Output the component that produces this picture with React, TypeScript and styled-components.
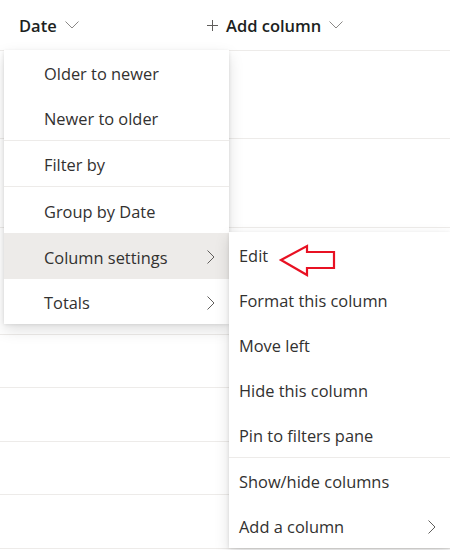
import styled, { createGlobalStyle } from 'styled-components'

const GlobalStyle = createGlobalStyle`
	body {
		margin: 0;
		background: #ffffff;
		font-family: 'Open Sans', 'Noto Sans', sans-serif;
		color: #323130;
	}
`

const Page = styled.div`
	position: relative;
	width: 450px;
	height: 550px;
	overflow: hidden;
`

const HeaderRow = styled.div`
	display: flex;
	align-items: center;
	height: 50px;
	border-bottom: 1px solid #edebe9;
`

const HeaderCell = styled.div<{ $width: number }>`
	display: flex;
	align-items: center;
	gap: 8px;
	width: ${(p) => p.$width}px;
	padding-left: 19px;
	box-sizing: border-box;
	font-size: 16.5px;
	font-weight: 600;
	color: #201f1e;
`

const Row = styled.div<{ $h: number }>`
	height: ${(p) => p.$h}px;
	border-bottom: 1px solid #edebe9;
`

const Menu = styled.div<{ $left: number; $top: number; $width: number }>`
	position: absolute;
	left: ${(p) => p.$left}px;
	top: ${(p) => p.$top}px;
	width: ${(p) => p.$width}px;
	background: #ffffff;
	box-shadow: 0 6.4px 14.4px rgba(0, 0, 0, 0.13), 0 1.2px 3.6px rgba(0, 0, 0, 0.11);
`

const Item = styled.div<{ $indent: number; $active?: boolean; $h?: number }>`
	display: flex;
	align-items: center;
	justify-content: space-between;
	height: ${(p) => p.$h ?? 45}px;
	padding: 2px 14px 0 ${(p) => p.$indent}px;
	box-sizing: border-box;
	font-size: 16.4px;
	color: #323130;
	background: ${(p) => (p.$active ? '#edebe9' : 'transparent')};
`

const Divider = styled.div`
	height: 1px;
	background: #edebe9;
`

const Arrow = styled.svg`
	position: absolute;
	left: 278px;
	top: 243px;
`

const Chevron = ({ dir }: { dir: 'down' | 'right' }) =>
	dir === 'down' ? (
		<svg width='14' height='8' viewBox='0 0 14 8'>
			<path d='M0.5 0.5 L7 7 L13.5 0.5' fill='none' stroke='#8a8886' strokeWidth='1' />
		</svg>
	) : (
		<svg width='8' height='14' viewBox='0 0 8 14'>
			<path d='M0.5 0.5 L7 7 L0.5 13.5' fill='none' stroke='#605e5c' strokeWidth='1' />
		</svg>
	)

const Plus = () => (
	<svg width='11' height='11' viewBox='0 0 11 11'>
		<path d='M5.5 0 V11 M0 5.5 H11' stroke='#605e5c' strokeWidth='1' />
	</svg>
)

type MenuEntry = { label: string; sub?: boolean; active?: boolean; h?: number } | 'divider'

const mainItems: MenuEntry[] = [
	{ label: 'Older to newer' },
	{ label: 'Newer to older' },
	'divider',
	{ label: 'Filter by' },
	'divider',
	{ label: 'Group by Date', h: 46 },
	{ label: 'Column settings', sub: true, active: true, h: 46 },
	{ label: 'Totals', sub: true },
]

const subItems: MenuEntry[] = [
	{ label: 'Edit' },
	{ label: 'Format this column' },
	{ label: 'Move left' },
	{ label: 'Hide this column' },
	{ label: 'Pin to filters pane' },
	'divider',
	{ label: 'Show/hide columns' },
	{ label: 'Add a column', sub: true },
]

const rowHeights = [87, 88, 106, 52, 53, 52, 53]

const MenuList = ({ items, indent }: { items: MenuEntry[]; indent: number }) => (
	<>
		{items.map((it, i) =>
			it === 'divider' ? (
				<Divider key={i} />
			) : (
				<Item key={i} $indent={indent} $active={it.active} $h={it.h}>
					<span>{it.label}</span>
					{it.sub ? <Chevron dir='right' /> : null}
				</Item>
			),
		)}
	</>
)

export default function App() {
	return (
		<Page>
			<GlobalStyle />
			<HeaderRow>
				<HeaderCell $width={188}>
					Date <Chevron dir='down' />
				</HeaderCell>
				<HeaderCell $width={262}>
					<Plus />
					Add column <Chevron dir='down' />
				</HeaderCell>
			</HeaderRow>
			{rowHeights.map((h, i) => (
				<Row key={i} $h={h} />
			))}

			<Menu $left={4} $top={50} $width={225}>
				<MenuList items={mainItems} indent={40} />
			</Menu>
			<Menu $left={229} $top={232} $width={221}>
				<MenuList items={subItems} indent={10} />
			</Menu>

			<Arrow width='60' height='36' viewBox='0 0 60 36'>
				<path
					d='M3 17 L29 3 L29 9 L56 9 L56 25 L29 25 L29 32 Z'
					fill='none'
					stroke='#e81123'
					strokeWidth='2.2'
					strokeLinejoin='miter'
				/>
			</Arrow>
		</Page>
	)
}
